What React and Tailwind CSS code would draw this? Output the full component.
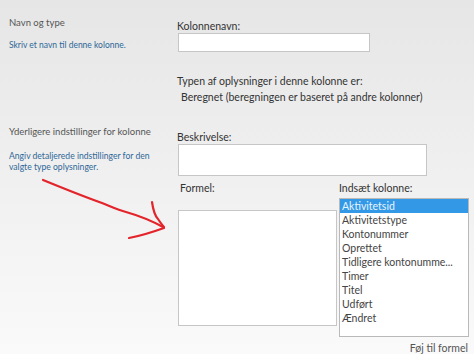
import React from 'react';

const columns = [
    'Aktivitetsid',
    'Aktivitetstype',
    'Kontonummer',
    'Oprettet',
    'Tidligere kontonumme...',
    'Timer',
    'Titel',
    'Udført',
    'Ændret',
];

const font = { fontFamily: 'Lato, "Open Sans", sans-serif' };

const RedArrow = () => (
    <svg className="absolute left-0 top-0 pointer-events-none" width="474" height="358" viewBox="0 0 474 358">
        <g fill="none" stroke="#e3242b" strokeWidth="2.2" strokeLinecap="round" strokeLinejoin="round">
            <path d="M43 180 C 65 189, 85 197, 102 203 C 112 207, 118 210, 126 212 C 140 216, 152 221, 163 227" />
            <path d="M152 202 C 153 209, 154 215, 158 219 C 160 222, 162 225, 164 227" />
            <path d="M129 238 C 140 236, 150 233, 164 228" />
        </g>
    </svg>
);

export default function App() {
    return (
        <div
            className="relative w-[474px] h-[358px] overflow-hidden bg-gradient-to-b from-[#e6e6e6] to-[#fafafa] border-b-4 border-white"
            style={font}
        >
            <div className="flex">
                <div className="w-[177px] pl-[9px] pt-[16px] shrink-0 whitespace-nowrap">
                    <div className="text-[9.5px] leading-[14px] text-[#555]">Navn og type</div>
                    <div className="mt-[8px] text-[8.5px] leading-[14px] text-[#2e6797]">Skriv et navn til denne kolonne.</div>
                    <div className="mt-[73px] text-[9.5px] leading-[14px] text-[#555]">Yderligere indstillinger for kolonne</div>
                    <div className="mt-[12px] text-[8.6px] leading-[10.5px] text-[#2e6797]">
                        Angiv detaljerede indstillinger for den
                        <br />
                        valgte type oplysninger.
                    </div>
                </div>

                <div className="flex-1 pt-[19px] text-[#333] whitespace-nowrap">
                    <div className="text-[10.5px] leading-[14px]">Kolonnenavn:</div>
                    <div className="ml-px w-[192px] h-[19px] bg-white border border-[#c6c6c6]" />
                    <div className="mt-[22px] text-[10.5px] leading-[14px]">Typen af oplysninger i denne kolonne er:</div>
                    <div className="mt-[2px] ml-[4px] text-[10.5px] leading-[14px]">
                        Beregnet (beregningen er baseret på andre kolonner)
                    </div>
                    <div className="mt-[26px] text-[10.5px] leading-[14px]">Beskrivelse:</div>
                    <div className="ml-px w-[249px] h-[32px] bg-white border border-[#c6c6c6]" />

                    <div className="mt-[5px] flex">
                        <div className="w-[162px]">
                            <div className="ml-[3px] text-[10.5px] leading-[14px]">Formel:</div>
                            <div className="mt-[15px] ml-px w-[159px] h-[116px] bg-white border border-[#c6c6c6]" />
                        </div>
                        <div className="w-[130px]">
                            <div className="text-[10.5px] leading-[14px]">Indsæt kolonne:</div>
                            <div className="mt-[3px] h-[139px] overflow-hidden bg-white border border-[#b9b9b9] text-[10.5px] leading-[14px]">
                                {columns.map((c, i) => (
                                    <div
                                        key={c}
                                        className={
                                            i === 0
                                                ? 'pl-[2px] bg-[#3399e6] text-[#e8f4ff]'
                                                : 'pl-[2px] text-[#444]'
                                        }
                                    >
                                        {c}
                                    </div>
                                ))}
                            </div>
                            <div className="mt-[4px] text-right pr-px text-[10.5px] leading-[14px] text-[#555]">Føj til formel</div>
                        </div>
                    </div>
                </div>
            </div>
            <RedArrow />
        </div>
    );
}
